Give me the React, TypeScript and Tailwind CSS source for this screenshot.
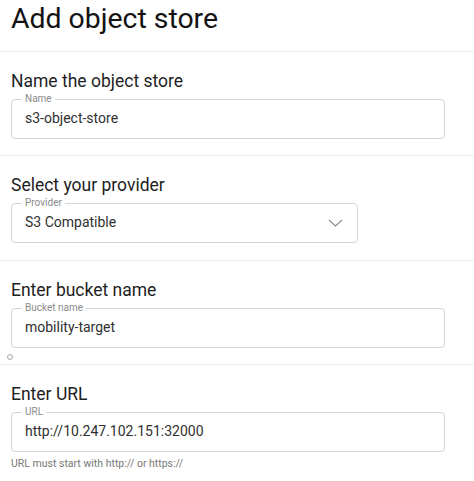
/**
 * Add object store form
 * Outlined text fields with notched labels, split by thin dividers
 */

const font = { fontFamily: "Roboto, 'Liberation Sans', sans-serif" };

function Divider() {
  return <div className="h-px w-full bg-[#ededed]" />;
}

function Field({
  label,
  value,
  width,
  select,
}: {
  label: string;
  value: string;
  width: string;
  select?: boolean;
}) {
  return (
    <fieldset className={`${width} rounded-[4px] border border-[#d4d4d4] pl-[10px] pr-[14px] pt-[4px] pb-[10px]`}>
      <legend className="px-[3px] text-[10px] leading-[10px] text-[#8a8a8a]">{label}</legend>
      <div className="flex items-center pl-[3px]">
        <span className="flex-1 text-[14px] leading-[20px] text-[#303030]">{value}</span>
        {select && (
          <svg width="15" height="8" viewBox="0 0 15 8" className="mt-[2px]" fill="none">
            <polyline points="1,1 7.5,7 14,1" stroke="#8c8c8c" strokeWidth="1.1" />
          </svg>
        )}
      </div>
    </fieldset>
  );
}

function Section({
  title,
  children,
}: {
  title: string;
  children: React.ReactNode;
}) {
  return (
    <div className="flex flex-col px-[11px] pt-[19px]">
      <h2 className="text-[17.5px] leading-[20px] text-[#1e1e1e]">{title}</h2>
      <div className="mt-[3px]">{children}</div>
    </div>
  );
}

export default function App() {
  return (
    <div className="h-[481px] w-[474px] overflow-hidden bg-white" style={font}>
      {/* Header */}
      <h1 className="px-[11px] pt-[3px] text-[28.4px] leading-[32px] text-[#121212]">Add object store</h1>
      <div className="mt-[16px]">
        <Divider />
      </div>

      <Section title="Name the object store">
        <Field label="Name" value="s3-object-store" width="w-[434px]" />
      </Section>
      <div className="mt-[16px]">
        <Divider />
      </div>

      <Section title="Select your provider">
        <Field label="Provider" value="S3 Compatible" width="w-[347px]" select />
      </Section>
      <div className="mt-[17px]">
        <Divider />
      </div>

      <Section title="Enter bucket name">
        <Field label="Bucket name" value="mobility-target" width="w-[434px]" />
        <div className="ml-[-4px] mt-[6px] mb-[4px] h-[6px] w-[6px] rounded-full border border-[#a8a8a8]" />
      </Section>
      <Divider />

      <Section title="Enter URL">
        <Field label="URL" value="http://10.247.102.151:32000" width="w-[434px]" />
        <p className="mt-[6px] text-[10.5px] leading-[12px] text-[#777777]">URL must start with http:// or https://</p>
      </Section>
    </div>
  );
}
